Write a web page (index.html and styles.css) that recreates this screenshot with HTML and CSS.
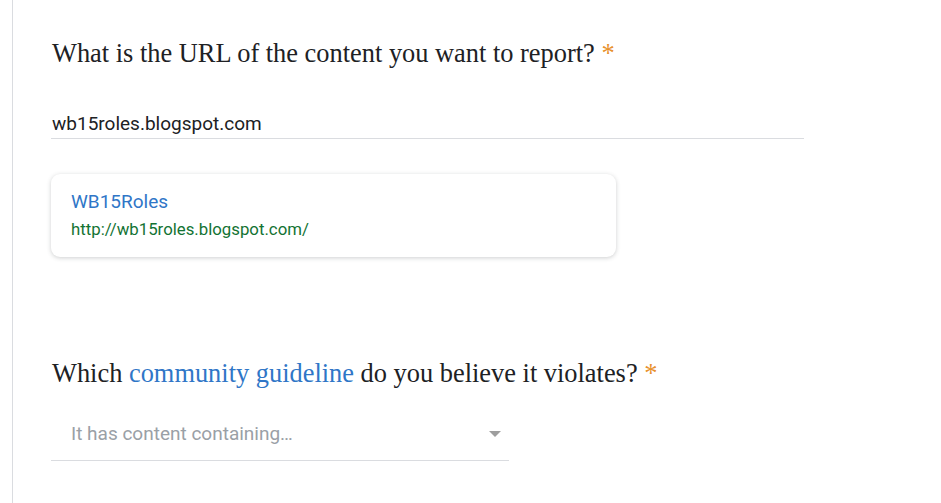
FILE: index.html
```html
<!DOCTYPE html>
<html>
<head>
<meta charset="utf-8">
<link rel="stylesheet" href="styles.css">
</head>
<body>
<div class="page">
  <div class="content">
    <div class="question q1">What is the URL of the content you want to report? <span class="req">*</span></div>
    <div class="input">wb15roles.blogspot.com</div>
    <div class="card">
      <div class="card-title">WB15Roles</div>
      <div class="card-url">http://wb15roles.blogspot.com/</div>
    </div>
    <div class="question q2">Which <a class="link">community guideline</a> do you believe it violates? <span class="req">*</span></div>
    <div class="select">
      <span class="placeholder">It has content containing…</span>
      <span class="arrow"></span>
    </div>
  </div>
</div>
</body>
</html>
```
FILE: styles.css
```css
html, body {
  margin: 0;
  padding: 0;
  background: #ffffff;
}
.page {
  margin-left: 12px;
  border-left: 1px solid #dadce0;
  height: 503px;
  box-sizing: border-box;
}
.content {
  padding-left: 38px;
  padding-top: 37px;
}
.question {
  font-family: "Liberation Serif", "Times New Roman", serif;
  font-size: 26.4px;
  line-height: 32px;
  color: #202124;
  margin-left: 1px;
}
.req {
  color: #e8912d;
}
.link {
  color: #2f76c7;
}
.input {
  margin-top: 43px;
  width: 752px;
  font-family: Roboto, "Noto Sans", sans-serif;
  font-size: 19px;
  line-height: 24px;
  color: #202124;
  padding: 0 0 2px 1px;
  border-bottom: 1px solid #dadce0;
}
.card {
  margin-top: 35px;
  width: 565px;
  height: 83px;
  box-sizing: border-box;
  border-radius: 9px;
  box-shadow: 0 1px 4px rgba(60, 64, 67, 0.25);
  padding: 17px 20px 16px;
  font-family: Roboto, "Noto Sans", sans-serif;
}
.card-title {
  color: #2f76c7;
  font-size: 19px;
  line-height: 22px;
}
.card-url {
  color: #137333;
  font-size: 16.8px;
  line-height: 20px;
  margin-top: 6px;
}
.q2 {
  margin-top: 100px;
}
.select {
  margin-top: 33px;
  width: 458px;
  display: flex;
  align-items: center;
  justify-content: space-between;
  padding: 0 8px 14px 20px;
  box-sizing: border-box;
  border-bottom: 1px solid #dadce0;
  font-family: Roboto, "Noto Sans", sans-serif;
  font-size: 19px;
  line-height: 24px;
}
.placeholder {
  color: #9aa0a6;
}
.arrow {
  width: 0;
  height: 0;
  border-left: 6px solid transparent;
  border-right: 6px solid transparent;
  border-top: 6px solid #9e9e9e;
}
```
